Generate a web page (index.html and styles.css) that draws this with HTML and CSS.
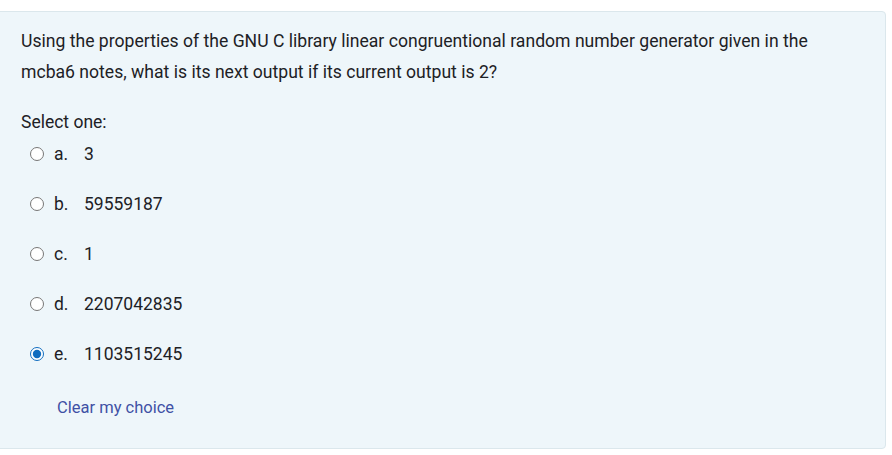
FILE: index.html
```html
<!DOCTYPE html>
<html lang="en">
<head>
  <meta charset="UTF-8" />
  <title>Question</title>
  <link rel="stylesheet" href="styles.css">
</head>
<body>
  <div class="formulation">
    <div class="qtext">
      <p>Using the properties of the GNU C library linear congruentional random number generator given in the mcba6 notes, what is its next output if its current output is 2?</p>
    </div>

    <div class="ablock">
      <div class="prompt">Select one:</div>
      <div class="answer">
        <label class="option"><input type="radio" name="q1"><span class="letter">a.</span><span>3</span></label>
        <label class="option"><input type="radio" name="q1"><span class="letter">b.</span><span>59559187</span></label>
        <label class="option"><input type="radio" name="q1"><span class="letter">c.</span><span>1</span></label>
        <label class="option"><input type="radio" name="q1"><span class="letter">d.</span><span>2207042835</span></label>
        <label class="option"><input type="radio" name="q1" checked><span class="letter">e.</span><span>1103515245</span></label>
      </div>
      <a class="clear" href="#">Clear my choice</a>
    </div>
  </div>
</body>
</html>
```

FILE: styles.css
```css
* {
  margin: 0;
  padding: 0;
  box-sizing: border-box;
}

body {
  background-color: #ffffff;
  font-family: Roboto, "Liberation Sans", sans-serif;
  font-size: 17.5px;
  color: #1d2125;
  padding: 11px 6px 0 0;
}

.formulation {
  margin-left: -10px;
  background-color: #eef6fa;
  border: 1px solid #dbe7ec;
  border-radius: 0 4px 4px 0;
  padding: 14px 50px 24px 30px;
  height: 438px;
}

.qtext p {
  font-size: 17.6px;
  line-height: 31px;
}

.ablock {
  margin-top: 22px;
}

.prompt {
  line-height: 24px;
}

.answer {
  display: flex;
  flex-direction: column;
  padding-left: 6px;
}

.option {
  display: flex;
  align-items: center;
  height: 50px;
  margin-top: -5px;
  margin-bottom: 5px;
}

.option input {
  width: 14px;
  height: 14px;
  margin: 0 10px 0 3px;
  accent-color: #0f6cbf;
}

.letter {
  width: 30px;
}

.clear {
  display: inline-block;
  margin-left: 36px;
  margin-top: 14px;
  font-size: 16.5px;
  color: #3f51a5;
  text-decoration: none;
}
```
